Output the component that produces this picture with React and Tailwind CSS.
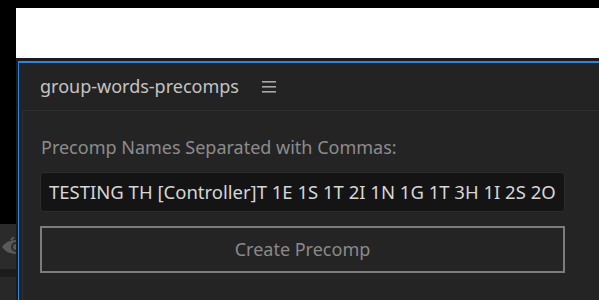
import React from 'react';

const font = { fontFamily: '"Noto Sans", "Open Sans", sans-serif' };

const MenuIcon = () => (
  <svg width="14" height="12" viewBox="0 0 14 12" className="block">
    <rect x="0" y="0" width="14" height="1.6" fill="#a8a8a8" />
    <rect x="0" y="5" width="14" height="1.6" fill="#a8a8a8" />
    <rect x="0" y="10" width="14" height="1.6" fill="#a8a8a8" />
  </svg>
);

const EyeStub = () => (
  <svg width="16" height="20" viewBox="0 0 16 20" className="block">
    <path d="M2 10 C6 4 12 3 18 3 L18 17 C12 17 6 16 2 10 Z" fill="#5a5a5a" />
    <circle cx="16" cy="10" r="5" fill="#2b2b2b" />
    <circle cx="16" cy="10" r="3" fill="#5a5a5a" />
    <path d="M11 3 L14 0" stroke="#5a5a5a" strokeWidth="2" />
  </svg>
);

export default function App() {
  const names = 'TESTING TH [Controller]T 1E 1S 1T 2I 1N 1G 1T 3H 1I 2S 2O';

  return (
    <div className="w-[599px] h-[300px] bg-black flex flex-col overflow-hidden" style={font}>
      <div className="h-[8px] bg-black shrink-0" />
      <div className="flex flex-1 min-h-0">
        {/* left strip of the neighbouring panel */}
        <div className="w-[16px] shrink-0 flex flex-col">
          <div className="h-[216px] bg-black" />
          <div className="h-[45px] bg-[#2b2b2b] flex items-center overflow-hidden">
            <EyeStub />
          </div>
          <div className="h-[8px] bg-[#1c1c1c]" />
          <div className="flex-1 bg-[#282828]" />
        </div>

        <div className="flex-1 min-w-0 flex flex-col bg-[#1b1b1b]">
          <div className="h-[50px] bg-white shrink-0" />
          <div className="flex-1 min-h-0 pt-[3px] pl-[2px] flex">
            <div className="flex-1 min-w-0 flex flex-col bg-[#232323] border-t-2 border-l border-[#2d84e0]">
              <div className="h-[47px] shrink-0 flex items-center pl-[21px] gap-[23px]">
                <span className="text-[18px] text-[#c4c4c4] leading-none pb-[2px]">group-words-precomps</span>
                <MenuIcon />
              </div>
              <div className="flex-1 min-w-0 ml-[3px] bg-[#242424] border-t border-l border-[#2e2e2e] pl-[17px]">
                <div className="pt-[27px] pl-[1px] text-[18px] leading-none text-[#8c8c8c]">
                  Precomp Names Separated with Commas:
                </div>
                <div className="mt-[16px] w-[525px] h-[40px] bg-[#141414] border border-[#2c2c2c] rounded-[4px] flex items-center pl-[8px] overflow-hidden">
                  <span className="text-[18.5px] text-[#d6d6d6] whitespace-nowrap leading-none">
                    {names}
                  </span>
                </div>
                <button
                  className="mt-[14px] w-[525px] h-[47px] border-2 border-[#7c7c7c] bg-transparent text-[18px] text-[#8a8a8a] flex items-center justify-center"
                  style={font}
                >
                  Create Precomp
                </button>
              </div>
            </div>
          </div>
        </div>
      </div>
    </div>
  );
}
